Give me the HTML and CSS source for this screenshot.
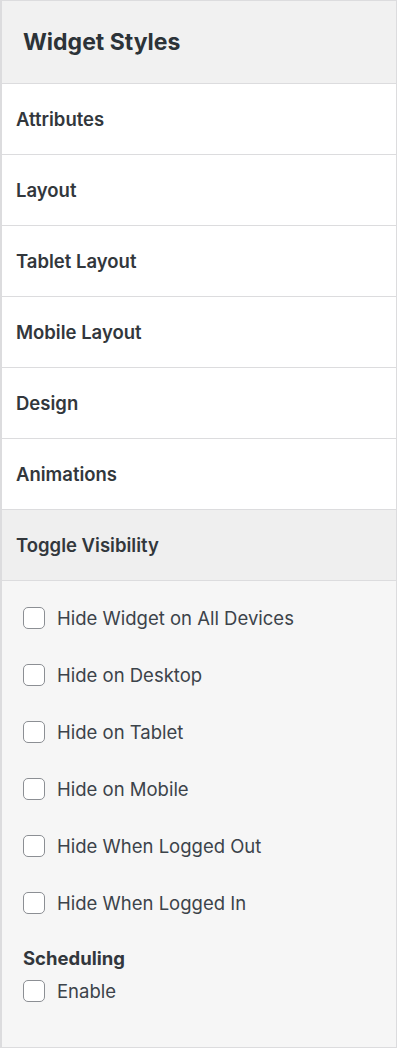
FILE: index.html
```html
<!DOCTYPE html>
<html lang="en">
<head>
<meta charset="UTF-8">
<title>Widget Styles</title>
<link rel="stylesheet" href="styles.css">
</head>
<body>
<div class="panel">
  <div class="panel-head">
    <h2>Widget Styles</h2>
  </div>
  <div class="section">Attributes</div>
  <div class="section">Layout</div>
  <div class="section">Tablet Layout</div>
  <div class="section">Mobile Layout</div>
  <div class="section">Design</div>
  <div class="section">Animations</div>
  <div class="section open">Toggle Visibility</div>
  <div class="section-body">
    <label class="check"><input type="checkbox"> Hide Widget on All Devices</label>
    <label class="check"><input type="checkbox"> Hide on Desktop</label>
    <label class="check"><input type="checkbox"> Hide on Tablet</label>
    <label class="check"><input type="checkbox"> Hide on Mobile</label>
    <label class="check"><input type="checkbox"> Hide When Logged Out</label>
    <label class="check"><input type="checkbox"> Hide When Logged In</label>
    <h4>Scheduling</h4>
    <label class="check"><input type="checkbox"> Enable</label>
  </div>
</div>
</body>
</html>
```

FILE: styles.css
```css
body {
  margin: 0;
  font-family: Inter, "Noto Sans", sans-serif;
  background: #fff;
}
.panel {
  width: 397px;
  box-sizing: border-box;
  border: 1px solid #dcdcde;
  border-left-width: 2px;
  background: #fff;
}
.panel-head {
  height: 82px;
  display: flex;
  align-items: center;
  padding: 0 21px;
  background: #f1f1f1;
  border-bottom: 1px solid #dcdcde;
}
.panel-head h2 {
  margin: 0;
  font-size: 23px;
  font-weight: 700;
  color: #2c3338;
}
.section {
  height: 70px;
  display: flex;
  align-items: center;
  padding: 0 14px;
  border-bottom: 1px solid #dcdcde;
  font-size: 18.5px;
  font-weight: 600;
  color: #32373c;
}
.section.open {
  background: #efefef;
}
.section-body {
  background: #f6f6f6;
  padding: 26px 21px 45px;
  display: flex;
  flex-direction: column;
  gap: 35px;
}
.check {
  display: flex;
  align-items: center;
  gap: 12px;
  height: 22px;
  font-size: 18.5px;
  color: #3c434a;
}
.check input {
  appearance: none;
  margin: 0;
  width: 22px;
  height: 22px;
  box-sizing: border-box;
  border: 1.5px solid #8c8f94;
  border-radius: 5px;
  background: #fff;
}
.section-body h4 {
  margin: -2px 0 -24px;
  font-size: 18.5px;
  font-weight: 700;
  line-height: 22px;
  color: #32373c;
}
```
